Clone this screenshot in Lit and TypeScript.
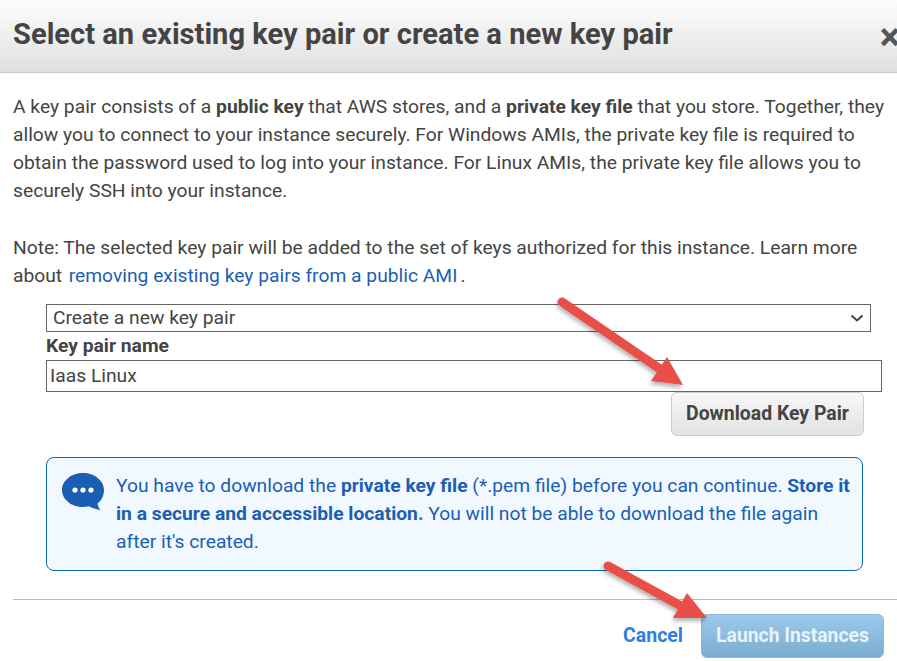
import { LitElement, html, css, svg } from "lit";
import { customElement } from "lit/decorators.js";

const arrow = (x1: number, y1: number, x2: number, y2: number, pts: string, sw: number) =>
  svg`<g filter="url(#sh)"><line x1=${x1} y1=${y1} x2=${x2} y2=${y2} stroke="#e9504a" stroke-width=${sw} stroke-linecap="round"/><polygon points=${pts} fill="#e9504a"/></g>`;

@customElement("app-root")
export class AppRoot extends LitElement {
  static styles = css`
    :host { display: block; position: relative; width: 897px; height: 661px; overflow: hidden; background: #fff; font-family: Roboto, "Liberation Sans", sans-serif; color: #444; font-size: 19.25px; line-height: 28px; }
    .head { height: 72px; border-bottom: 1px solid #c8c8c8; background: linear-gradient(#fdfdfd, #e0e0e0); display: flex; align-items: center; justify-content: space-between; padding: 0 0 0 13px; overflow: hidden; }
    .title { font-size: 29.1px; font-weight: 700; color: #444; margin: -5px 0 0; line-height: 36px; }
    .x { font-size: 38px; font-weight: 700; color: #555; margin-right: -3px; margin-top: 2px; line-height: 36px; }
    .body { padding: 20px 0 0 13px; width: 878px; }
    p { margin: 0; }
    p + p { margin-top: 29px; }
    b { font-weight: 700; }
    a { color: #1a5fb4; text-decoration: none; margin-left: 1.7px; }
    .dot { margin-left: 3px; }
    .form { margin: 14px 0 0 46px; width: 836px; }
    .sel { width: 825px; height: 28px; box-sizing: border-box; border: 1px solid #666; display: flex; align-items: center; justify-content: space-between; padding: 0 6px; line-height: 26px; }
    label { display: block; font-weight: 700; height: 28px; line-height: 28px; }
    .inp { height: 32px; box-sizing: border-box; border: 1px solid #666; padding: 0 3px; line-height: 30px; }
    .btns { display: flex; justify-content: flex-end; padding-right: 18px; }
    .dl { width: 193px; height: 44px; box-sizing: border-box; border: 1px solid #ccc; border-radius: 6px; background: linear-gradient(#f8f8f8, #e2e2e2); font-weight: 700; font-size: 19.4px; display: flex; align-items: center; justify-content: center; color: #444; }
    .info { margin: 21px 0 0 46px; width: 817px; height: 114px; box-sizing: border-box; border: 1px solid #0a68b8; border-radius: 8px; background: #f1f8ff; color: #1a5fb4; display: flex; padding: 14px 6px 0 15px; gap: 12px; font-size: 19.25px; }
    .info svg { flex: none; margin-top: 1px; }
    .hr { margin: 28px 0 0 13px; height: 1px; background: #bbb; width: 884px; }
    .foot { display: flex; justify-content: flex-end; align-items: center; gap: 18px; padding: 14px 13px 0 0; font-size: 19.5px; }
    .cancel { font-weight: 700; color: #2d7fe0; }
    .launch { width: 183px; height: 44px; box-sizing: border-box; border: 1px solid #8cb8d8; border-radius: 6px; background: linear-gradient(#9ccaec, #7aaccf); color: #e8f3fb; font-weight: 700; font-size: 19.35px; display: flex; align-items: center; justify-content: center; }
    .over { position: absolute; left: 0; top: 0; pointer-events: none; }
  `;

  render() {
    return html`
      <div class="head">
        <h1 class="title">Select an existing key pair or create a new key pair</h1>
        <span class="x">×</span>
      </div>
      <div class="body">
        <p>A key pair consists of a <b>public key</b> that AWS stores, and a <b>private key file</b> that you store. Together, they allow you to connect to your instance securely. For Windows AMIs, the private key file is required to obtain the password used to log into your instance. For Linux AMIs, the private key file allows you to securely SSH into your instance.</p>
        <p>Note: The selected key pair will be added to the set of keys authorized for this instance. Learn more about <a>removing existing key pairs from a public AMI</a><span class="dot">.</span></p>
      </div>
      <div class="form">
        <div class="sel"><span>Create a new key pair</span>
          <svg width="14" height="8" viewBox="0 0 14 8"><path d="M1.500 1.500 7 6.500l5.500-5" fill="none" stroke="#444" stroke-width="2"/></svg>
        </div>
        <label>Key pair name</label>
        <div class="inp">Iaas Linux</div>
        <div class="btns"><div class="dl">Download Key Pair</div></div>
      </div>
      <div class="info">
        <svg width="42" height="38" viewBox="0 0 42 38">
          <path d="M21 0C9.700 0 0 7.500 0 17c0 9.500 9.700 17 21 17 2 0 4-.2 6-.7 3 1.700 7 3 11.500 3.700-1.500-1.500-2.500-3.800-3-6.500C39.500 27.500 42 22.700 42 17 42 7.500 32.300 0 21 0z" fill="#1a5fb4"/>
          <circle cx="13" cy="17" r="2.600" fill="#fff"/><circle cx="21" cy="17" r="2.600" fill="#fff"/><circle cx="29" cy="17" r="2.600" fill="#fff"/>
        </svg>
        <div>You have to download the <b>private key file</b> (*.pem file) before you can continue. <b>Store it in a secure and accessible location.</b> You will not be able to download the file again after it's created.</div>
      </div>
      <div class="hr"></div>
      <div class="foot"><span class="cancel">Cancel</span><div class="launch">Launch Instances</div></div>
      <svg class="over" width="897" height="661">
        <defs><filter id="sh" x="-20%" y="-20%" width="140%" height="140%"><feDropShadow dx="-1" dy="3" stdDeviation="2" flood-color="#000" flood-opacity="0.3"/></filter></defs>
        ${arrow(562, 302, 660, 369, "683,385 667,357 651,381", 9)}
        ${arrow(608, 566, 681, 606, "707,618 687,593 673,618", 9)}
      </svg>
    `;
  }
}
